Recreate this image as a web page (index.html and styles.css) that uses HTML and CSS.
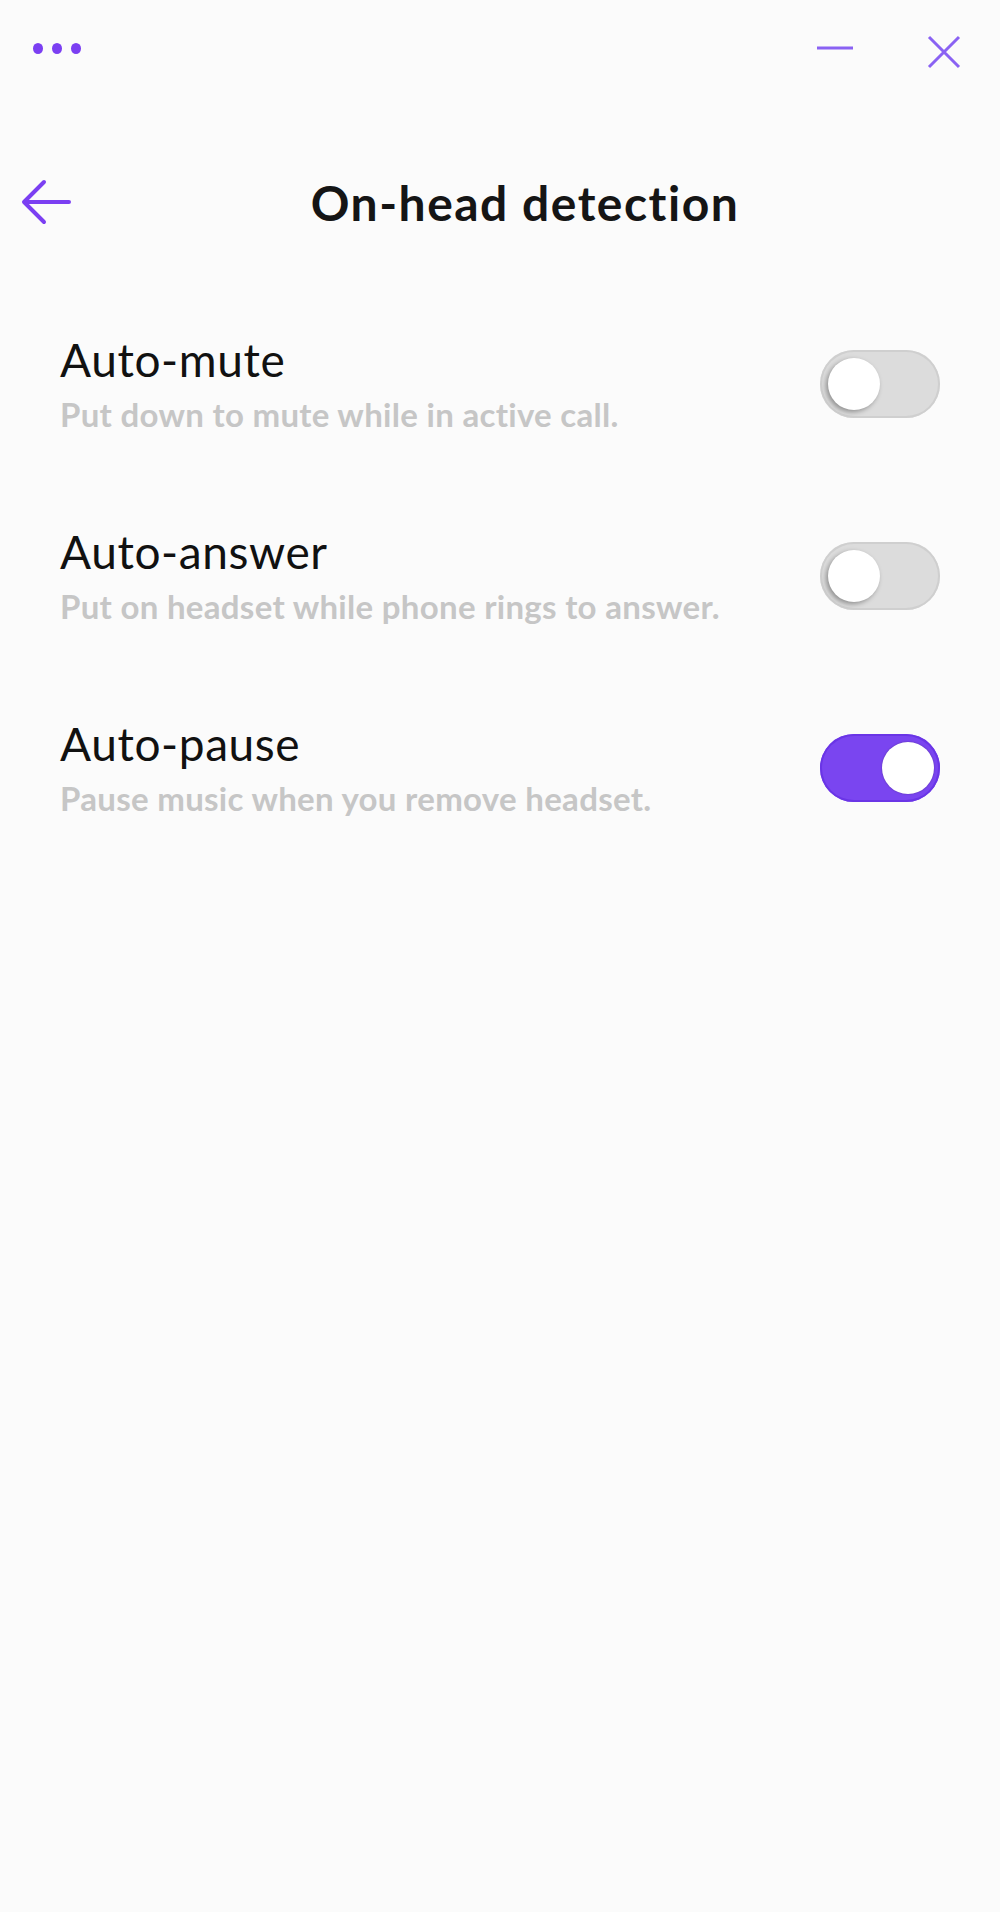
FILE: index.html
```html
<!DOCTYPE html>
<html lang="en">
<head>
<meta charset="utf-8">
<title>On-head detection</title>
<link rel="stylesheet" href="styles.css">
</head>
<body>
<div class="app">
  <div class="titlebar">
    <div class="more">
      <span class="dot"></span><span class="dot"></span><span class="dot"></span>
    </div>
    <div class="winctl">
      <svg class="minimize" width="36" height="6" viewBox="0 0 36 6"><line x1="0" y1="3" x2="36" y2="3" stroke="#8a62f3" stroke-width="3"/></svg>
      <svg class="close" width="34" height="34" viewBox="0 0 34 34"><path d="M2 2 L32 32 M32 2 L2 32" stroke="#8a62f3" stroke-width="3" fill="none"/></svg>
    </div>
  </div>
  <div class="header">
    <svg class="back" width="50" height="46" viewBox="0 0 50 46"><path d="M48 23 H4 M23 3 L3 23 L23 43" stroke="#7b3ff2" stroke-width="4" fill="none" stroke-linecap="round" stroke-linejoin="round"/></svg>
    <h1 class="title">On-head detection</h1>
  </div>
  <div class="list">
    <div class="row">
      <div class="text">
        <div class="name">Auto-mute</div>
        <div class="desc">Put down to mute while in active call.</div>
      </div>
      <div class="toggle"><span class="knob"></span></div>
    </div>
    <div class="row">
      <div class="text">
        <div class="name">Auto-answer</div>
        <div class="desc">Put on headset while phone rings to answer.</div>
      </div>
      <div class="toggle"><span class="knob"></span></div>
    </div>
    <div class="row">
      <div class="text">
        <div class="name">Auto-pause</div>
        <div class="desc">Pause music when you remove headset.</div>
      </div>
      <div class="toggle on"><span class="knob"></span></div>
    </div>
  </div>
</div>
</body>
</html>
```

FILE: styles.css
```css
html, body {
  margin: 0;
  padding: 0;
  background: #fbfbfb;
}
body {
  font-family: Lato, "Open Sans", sans-serif;
  color: #111;
}
.app {
  width: 1000px;
  min-height: 1912px;
  background: #fbfbfb;
}
.titlebar {
  height: 96px;
  display: flex;
  align-items: center;
  justify-content: space-between;
  padding: 0 39px 0 33px;
  box-sizing: border-box;
}
.more {
  display: flex;
  gap: 9px;
  align-items: center;
}
.dot {
  width: 10px;
  height: 11px;
  border-radius: 50%;
  background: #7b3ff2;
}
.winctl {
  display: flex;
  align-items: center;
  gap: 74px;
  padding-top: 4px;
}
.minimize { display: block; margin-top: -4px; }
.close { display: block; margin-top: 4px; }
.header {
  height: 212px;
  display: flex;
  align-items: center;
  padding: 0 21px;
}
.back {
  display: block;
  flex: none;
}
.title {
  flex: 1;
  margin: 0;
  text-align: center;
  font-size: 48px;
  letter-spacing: 1.5px;
  font-weight: 700;
  color: #151515;
}
.list {
  display: flex;
  flex-direction: column;
  gap: 40px;
  padding: 0 60px;
}
.row {
  height: 152px;
  display: flex;
  align-items: center;
  justify-content: space-between;
}
.name {
  font-size: 46px;
  line-height: 54px;
  letter-spacing: 0.6px;
  font-weight: 400;
  color: #111;
}
.desc {
  font-size: 33px;
  line-height: 42px;
  letter-spacing: 0.3px;
  margin-top: 6px;
  font-weight: 700;
  color: #c6c6c6;
}
.toggle {
  position: relative;
  width: 120px;
  height: 68px;
  border-radius: 34px;
  background: #dcdcdc;
  box-shadow: inset 0 0 0 2px #cfcfcf;
  box-sizing: border-box;
}
.toggle .knob {
  position: absolute;
  left: 8px;
  top: 8px;
  width: 52px;
  height: 52px;
  border-radius: 50%;
  background: #fff;
  box-shadow: -2px 2px 5px rgba(0,0,0,0.35);
}
.toggle.on {
  background: #7a45f0;
  box-shadow: inset 0 0 0 2px #6a35e6;
}
.toggle.on .knob {
  left: auto;
  right: 6px;
  box-shadow: 0 0 2px rgba(0,0,0,0.3);
}
```
